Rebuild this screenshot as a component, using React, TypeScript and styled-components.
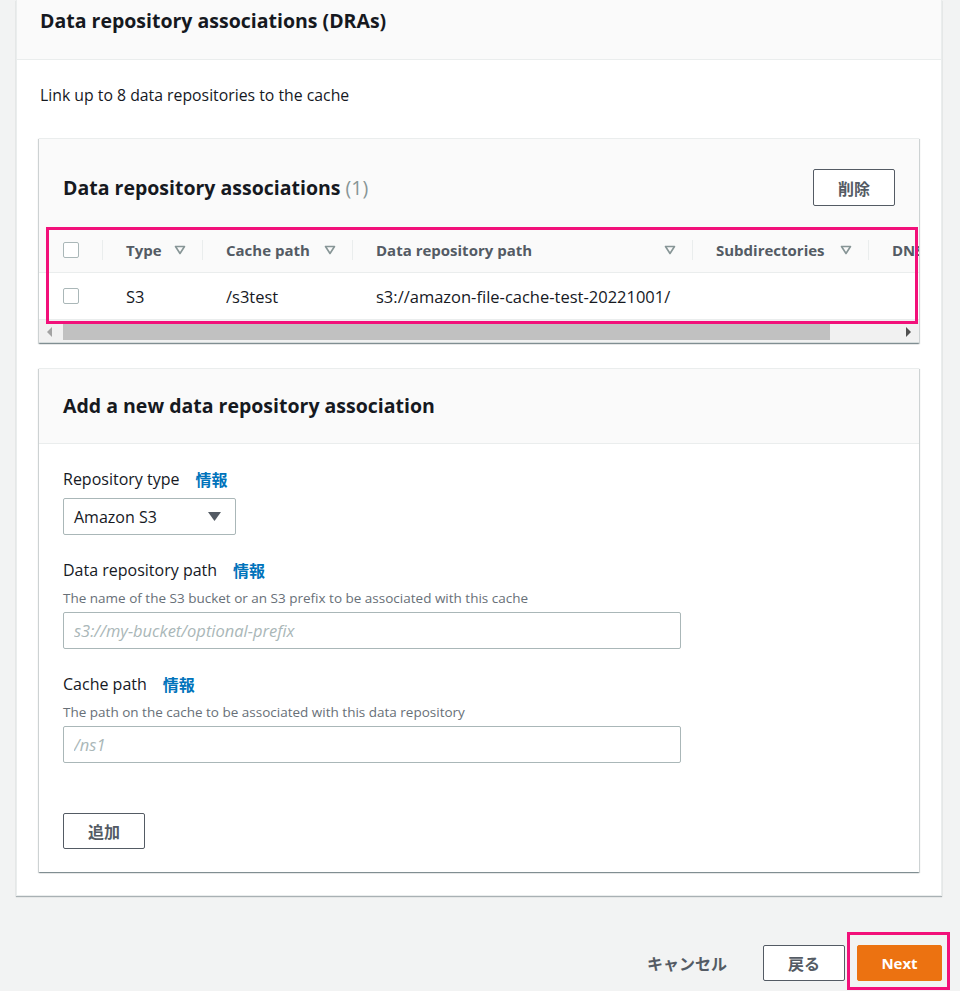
import React from 'react';
import styled, { createGlobalStyle } from 'styled-components';

const GlobalStyle = createGlobalStyle`
  html, body {
    margin: 0;
    padding: 0;
    background: #f2f3f3;
  }
  body {
    font-family: "Open Sans", "Noto Sans CJK JP", sans-serif;
    color: #16191f;
    font-size: 16px;
  }
  * { box-sizing: border-box; }
`;

const Page = styled.div`
  width: 960px;
  height: 991px;
  padding: 0 18px 0 16px;
  overflow: hidden;
`;

const Panel = styled.section`
  background: #fff;
  border: 1px solid #eaeded;
  border-top: none;
  box-shadow: 0 1px 1px rgba(0, 28, 36, 0.3);
`;

const PanelHeader = styled.div<{ $h: number }>`
  height: ${p => p.$h}px;
  background: #fafafa;
  border-bottom: 1px solid #eaeded;
  display: flex;
  align-items: center;
  padding: 0 24px;
`;

const TopHeader = styled(PanelHeader)`
  align-items: flex-start;
  padding: 8px 23px 0;
`;

const Title = styled.h2`
  margin: 0;
  font-size: 19.5px;
  line-height: 26px;
  font-weight: 700;
  color: #16191f;
`;

const Count = styled.span`
  color: #879596;
  font-weight: 400;
`;

const PanelBody = styled.div`
  padding: 25px 22px 23px;
`;

const Lead = styled.p`
  margin: 0 0 33px 1px;
  line-height: 20px;
  font-size: 15.8px;
`;

const Card = styled.div`
  background: #fff;
  border-top: 1px solid #eaeded;
  box-shadow: 0 1px 1px rgba(0, 28, 36, 0.3), 1px 1px 1px rgba(0, 28, 36, 0.15), -1px 1px 1px rgba(0, 28, 36, 0.15);
  position: relative;
`;

const CardTop = styled.div`
  background: #fafafa;
  height: 89px;
  display: flex;
  align-items: center;
  justify-content: space-between;
  padding: 8px 24px 0;
`;

const Button = styled.button<{ $w: number }>`
  width: ${p => p.$w}px;
  height: 36px;
  background: #fff;
  border: 1px solid #545b64;
  border-radius: 2px;
  color: #545b64;
  font-family: "Noto Sans CJK JP", sans-serif;
  font-weight: 700;
  font-size: 16px;
  padding: 0;
  cursor: pointer;
`;

const DeleteButton = styled(Button)`
  height: 37px;
`;

const PrimaryButton = styled(Button)`
  background: #ec7211;
  border-color: #ec7211;
  color: #fff;
  font-family: "Open Sans", sans-serif;
  font-size: 15px;
`;

const TableClip = styled.div`
  overflow: hidden;
`;

const Row = styled.div<{ $head?: boolean }>`
  display: flex;
  height: ${p => (p.$head ? 45 : 47)}px;
  width: 1200px;
  background: ${p => (p.$head ? '#fafafa' : '#fff')};
  border-bottom: 1px solid #eaeded;
  align-items: center;
`;

const Cell = styled.div<{ $w: number; $divider?: boolean; $head?: boolean }>`
  flex: 0 0 ${p => p.$w}px;
  height: 100%;
  display: flex;
  align-items: center;
  justify-content: space-between;
  padding: 0 16px 0 24px;
  position: relative;
  font-weight: ${p => (p.$head ? 700 : 400)};
  color: ${p => (p.$head ? '#545b64' : '#16191f')};
  white-space: nowrap;
  font-size: ${p => (p.$head ? 15 : 16.5)}px;
  &::before {
    content: '';
    display: ${p => (p.$divider ? 'block' : 'none')};
    position: absolute;
    left: 0;
    top: 12px;
    bottom: 12px;
    border-left: 1px solid #eaeded;
  }
`;

const Checkbox = styled.span`
  width: 16px;
  height: 16px;
  border: 1px solid #aab7b8;
  border-radius: 2px;
  background: #fff;
  display: inline-block;
`;

const ScrollBar = styled.div`
  height: 23px;
  background: #f1f1f1;
  display: flex;
  align-items: center;
  padding: 2px 0 0 0;
  border-bottom: 1px solid #d5dbdb;
`;

const Arrow = styled.span<{ $right?: boolean }>`
  width: 0;
  height: 0;
  border-top: 5px solid transparent;
  border-bottom: 5px solid transparent;
  ${p => (p.$right ? 'border-left: 5px solid #505050;' : 'border-right: 5px solid #a3a3a3;')}
  margin: ${p => (p.$right ? '0 0 0 76px' : '0 11px 0 8px')};
`;

const Thumb = styled.span`
  width: 767px;
  height: 16px;
  background: #c1c1c1;
`;

const Highlight = styled.div<{ $t: number; $l: number; $r: number; $b: number }>`
  position: absolute;
  top: ${p => p.$t}px;
  left: ${p => p.$l}px;
  right: ${p => p.$r}px;
  bottom: ${p => p.$b}px;
  border: 3px solid #f2107a;
  pointer-events: none;
`;

const FormCard = styled(Card)`
  margin-top: 25px;
`;

const FormBody = styled.div`
  padding: 25px 24px 23px;
  display: flex;
  flex-direction: column;
  align-items: flex-start;
`;

const Label = styled.div`
  display: flex;
  align-items: center;
  gap: 16px;
  line-height: 20px;
  font-size: 16px;
`;

const Info = styled.a`
  color: #0073bb;
  font-weight: 700;
  font-size: 16px;
  font-family: "Noto Sans CJK JP", sans-serif;
  text-decoration: none;
`;

const Description = styled.div`
  margin-top: 10px;
  font-size: 13.5px;
  line-height: 16px;
  color: #687078;
`;

const Select = styled.div`
  margin-top: 9px;
  width: 173px;
  height: 37px;
  border: 1px solid #aab7b8;
  border-radius: 2px;
  display: flex;
  align-items: center;
  justify-content: space-between;
  padding: 0 14px 0 10px;
  font-size: 16px;
`;

const Input = styled.input`
  margin-top: 6px;
  width: 618px;
  height: 37px;
  border: 1px solid #aab7b8;
  border-radius: 2px;
  padding: 0 10px;
  font-size: 16.5px;
  font-family: "Open Sans", sans-serif;
  &::placeholder {
    color: #aab7b8;
    font-style: italic;
  }
`;

const FieldGap = styled.div<{ $h: number }>`
  height: ${p => p.$h}px;
`;

const Footer = styled.div`
  display: flex;
  justify-content: flex-end;
  align-items: center;
  margin-top: 49px;
`;

const TextButton = styled.button`
  background: none;
  border: none;
  font-family: "Noto Sans CJK JP", sans-serif;
  font-weight: 700;
  font-size: 16px;
  color: #545b64;
  padding: 0;
  margin-right: 36px;
`;

const NextWrap = styled.div`
  position: relative;
  margin-left: 12px;
`;

const SortIcon = () => (
  <svg width="12" height="10" viewBox="0 0 12 10">
    <path d="M1.5 1.5 H10.5 L6 8.5 Z" fill="none" stroke="#879596" strokeWidth="1.6" strokeLinejoin="round" />
  </svg>
);

const Caret = () => (
  <svg width="13" height="9" viewBox="0 0 13 9">
    <path d="M0 0 H13 L6.5 9 Z" fill="#545b64" />
  </svg>
);

const columns = [
  { label: 'Type', w: 100, value: 'S3' },
  { label: 'Cache path', w: 150, value: '/s3test' },
  { label: 'Data repository path', w: 340, value: 's3://amazon-file-cache-test-20221001/' },
  { label: 'Subdirectories', w: 176, value: '' },
  { label: 'DNS name', w: 200, value: '' },
];

export default function App() {
  return (
    <Page>
      <GlobalStyle />
      <Panel>
        <TopHeader $h={60}>
          <Title>Data repository associations (DRAs)</Title>
        </TopHeader>
        <PanelBody>
          <Lead>Link up to 8 data repositories to the cache</Lead>

          <Card>
            <CardTop>
              <Title>
                Data repository associations <Count>(1)</Count>
              </Title>
              <DeleteButton $w={82}>削除</DeleteButton>
            </CardTop>
            <TableClip>
              <Row $head>
                <Cell $w={63} $head><Checkbox /></Cell>
                {columns.map(c => (
                  <Cell key={c.label} $w={c.w} $head $divider>
                    <span>{c.label}</span>
                    <SortIcon />
                  </Cell>
                ))}
              </Row>
              <Row>
                <Cell $w={63}><Checkbox /></Cell>
                {columns.map(c => (
                  <Cell key={c.label} $w={c.w}>
                    <span>{c.value}</span>
                  </Cell>
                ))}
              </Row>
            </TableClip>
            <ScrollBar>
              <Arrow />
              <Thumb />
              <Arrow $right />
            </ScrollBar>
            <Highlight $t={88} $l={7} $r={1} $b={19} />
          </Card>

          <FormCard>
            <PanelHeader $h={75}>
              <Title>Add a new data repository association</Title>
            </PanelHeader>
            <FormBody>
              <Label>
                Repository type <Info href="#">情報</Info>
              </Label>
              <Select>
                <span>Amazon S3</span>
                <Caret />
              </Select>

              <FieldGap $h={25} />
              <Label>
                Data repository path <Info href="#">情報</Info>
              </Label>
              <Description>The name of the S3 bucket or an S3 prefix to be associated with this cache</Description>
              <Input placeholder="s3://my-bucket/optional-prefix" />

              <FieldGap $h={25} />
              <Label>
                Cache path <Info href="#">情報</Info>
              </Label>
              <Description>The path on the cache to be associated with this data repository</Description>
              <Input placeholder="/ns1" />

              <FieldGap $h={50} />
              <Button $w={82}>追加</Button>
            </FormBody>
          </FormCard>
        </PanelBody>
      </Panel>

      <Footer>
        <TextButton>キャンセル</TextButton>
        <Button $w={82}>戻る</Button>
        <NextWrap>
          <PrimaryButton $w={85}>Next</PrimaryButton>
          <Highlight $t={-13} $l={-10} $r={-8} $b={-9} />
        </NextWrap>
      </Footer>
    </Page>
  );
}
